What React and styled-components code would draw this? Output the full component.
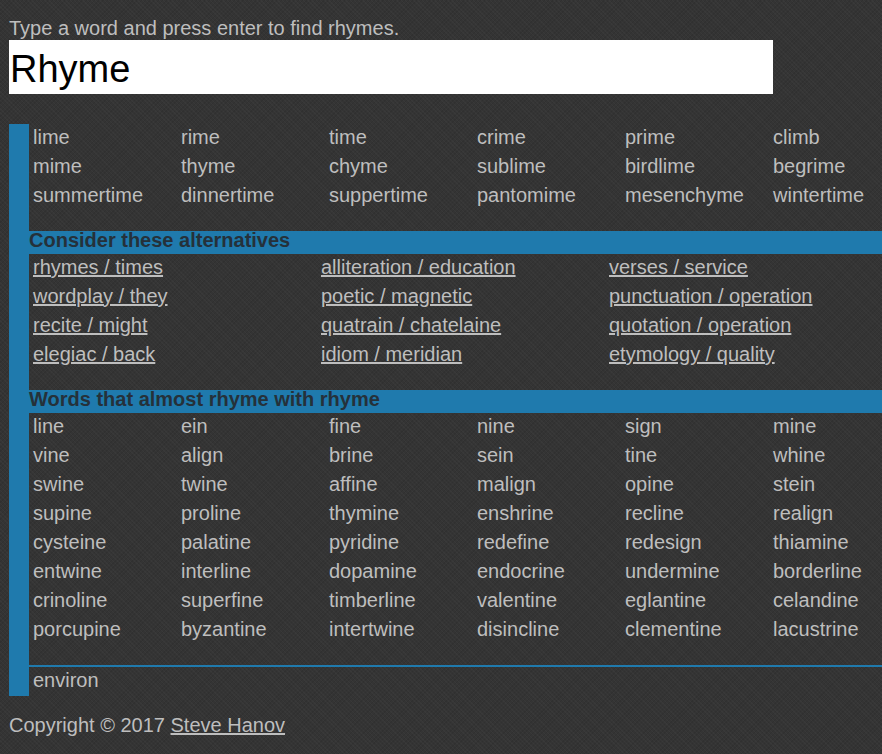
import React from "react";
import styled, { createGlobalStyle } from "styled-components";

const Global = createGlobalStyle`
  html, body { margin: 0; padding: 0; }
  body {
    width: 882px;
    height: 754px;
    overflow: hidden;
    background-color: #343434;
    background-image:
      repeating-linear-gradient(45deg, rgba(255,255,255,0.022) 0 1px, rgba(0,0,0,0) 1px 3px),
      repeating-linear-gradient(-45deg, rgba(0,0,0,0.07) 0 1px, rgba(0,0,0,0) 1px 3px);
    color: #bebebe;
    font-family: "Liberation Sans", Arial, sans-serif;
    font-size: 20px;
    line-height: 23px;
  }
`;

const Page = styled.div`
  display: flex;
  flex-direction: column;
  padding: 17px 0 0 9px;
`;
const Prompt = styled.div`
  height: 23px;
`;
const SearchInput = styled.input`
  display: block;
  box-sizing: border-box;
  width: 764px;
  height: 54px;
  border: 0;
  outline: 0;
  margin: 0;
  padding: 5px 1px 0;
  background: #fff;
  color: #000;
  font-family: "Liberation Sans", Arial, sans-serif;
  font-size: 38px;
`;
const Results = styled.div`
  margin-top: 30px;
  height: 572px;
  box-sizing: border-box;
  border-left: 20px solid #1f7aad;
`;
const Grid = styled.div`
  display: grid;
  grid-template-columns: repeat(${(p) => p.$cols}, ${(p) => p.$width}px);
  grid-auto-rows: 29px;
  padding-left: 4px;
  margin-top: ${(p) => p.$top || 0}px;
`;
const Cell = styled.div`
  display: flex;
  align-items: center;
  white-space: nowrap;
  height: 29px;
`;
const Alt = styled.a`
  color: #bebebe;
  text-decoration: underline;
`;
const Heading = styled.div`
  background: #1f7aad;
  color: #25313a;
  font-weight: bold;
  height: 23px;
  line-height: 19px;
  margin-top: ${(p) => p.$top}px;
  margin-bottom: -1px;
`;
const Rule = styled.div`
  height: 2px;
  background: #1f7aad;
  margin-top: 21px;
`;
const Footer = styled.div`
  margin-top: 18px;
`;
const FooterLink = styled.a`
  color: #bebebe;
  text-decoration: underline;
`;

const perfect = ["lime","rime","time","crime","prime","climb","mime","thyme","chyme","sublime","birdlime","begrime","summertime","dinnertime","suppertime","pantomime","mesenchyme","wintertime"];
const alts = ["rhymes / times","alliteration / education","verses / service","wordplay / they","poetic / magnetic","punctuation / operation","recite / might","quatrain / chatelaine","quotation / operation","elegiac / back","idiom / meridian","etymology / quality"];
const almost = ["line","ein","fine","nine","sign","mine","vine","align","brine","sein","tine","whine","swine","twine","affine","malign","opine","stein","supine","proline","thymine","enshrine","recline","realign","cysteine","palatine","pyridine","redefine","redesign","thiamine","entwine","interline","dopamine","endocrine","undermine","borderline","crinoline","superfine","timberline","valentine","eglantine","celandine","porcupine","byzantine","intertwine","disincline","clementine","lacustrine"];

export default function App() {
  return (
    <Page>
      <Global />
      <Prompt>Type a word and press enter to find rhymes.</Prompt>
      <SearchInput defaultValue="Rhyme" />
      <Results>
        <Grid $cols={6} $width={148} $top={-1}>
          {perfect.map((w) => <Cell key={w}>{w}</Cell>)}
        </Grid>
        <Heading $top={21}>Consider these alternatives</Heading>
        <Grid $cols={3} $width={288}>
          {alts.map((w) => <Cell key={w}><Alt href="#">{w}</Alt></Cell>)}
        </Grid>
        <Heading $top={21}>Words that almost rhyme with rhyme</Heading>
        <Grid $cols={6} $width={148}>
          {almost.map((w) => <Cell key={w}>{w}</Cell>)}
        </Grid>
        <Rule />
        <Grid $cols={1} $width={300} $top={-1}>
          <Cell>environ</Cell>
        </Grid>
      </Results>
      <Footer>Copyright © 2017 <FooterLink href="#">Steve Hanov</FooterLink></Footer>
    </Page>
  );
}
